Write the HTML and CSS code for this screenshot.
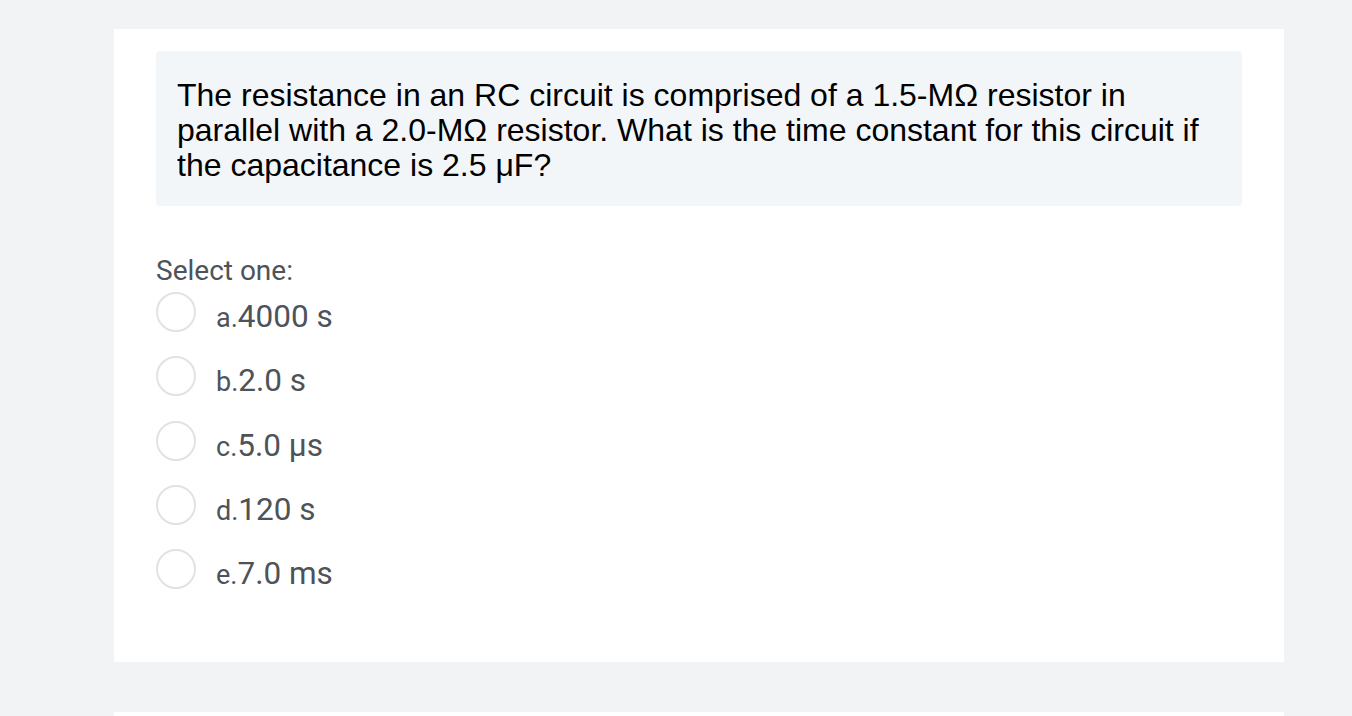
FILE: index.html
```html
<!DOCTYPE html>
<html>
<head>
<meta charset="utf-8">
<link rel="stylesheet" href="styles.css">
</head>
<body>
<div class="page">
  <div class="card">
    <div class="qtext">The resistance in an RC circuit is comprised of a 1.5-MΩ resistor in parallel with a 2.0-MΩ resistor. What is the time constant for this circuit if the capacitance is 2.5 μF?</div>
    <div class="prompt">Select one:</div>
    <div class="answers">
      <label class="opt"><span class="radio"></span><span class="lbl"><span class="num">a.</span>4000 s</span></label>
      <label class="opt"><span class="radio"></span><span class="lbl"><span class="num">b.</span>2.0 s</span></label>
      <label class="opt"><span class="radio"></span><span class="lbl"><span class="num">c.</span>5.0 μs</span></label>
      <label class="opt"><span class="radio"></span><span class="lbl"><span class="num">d.</span>120 s</span></label>
      <label class="opt"><span class="radio"></span><span class="lbl"><span class="num">e.</span>7.0 ms</span></label>
    </div>
  </div>
  <div class="card next"></div>
</div>
</body>
</html>
```
FILE: styles.css
```css
html, body {
  margin: 0;
  padding: 0;
  background: #f2f3f5;
  height: 100%;
  overflow: hidden;
}
.page {
  padding: 29px 68px 0 114px;
  display: flex;
  flex-direction: column;
  gap: 50px;
}
.card {
  background: #ffffff;
  width: 1170px;
  height: 633px;
  flex: none;
  box-sizing: border-box;
  padding: 22px 42px 0 42px;
}
.card.next {
  height: 100px;
}
.qtext {
  background: #f3f6f9;
  border-radius: 4px;
  padding: 27px 21px 23px 21px;
  font-family: "Liberation Sans", Arial, sans-serif;
  font-size: 32px;
  line-height: 35px;
  color: #000;
}
.prompt {
  margin-top: 50px;
  font-family: Roboto, sans-serif;
  font-size: 28px;
  line-height: 30px;
  color: #4d5359;
}
.answers {
  display: flex;
  flex-direction: column;
  gap: 24.3px;
  margin-top: 6px;
}
.opt {
  display: flex;
  align-items: flex-start;
  gap: 20px;
  height: 40px;
}
.radio {
  width: 40px;
  height: 40px;
  box-sizing: border-box;
  border: 2px solid #e0e3e6;
  border-radius: 50%;
  background: #fff;
  flex: none;
}
.lbl {
  font-family: Roboto, sans-serif;
  font-size: 31.5px;
  color: #4d5359;
  line-height: 40px;
  margin-top: 5px;
}
.num {
  font-size: 27px;
}
```
